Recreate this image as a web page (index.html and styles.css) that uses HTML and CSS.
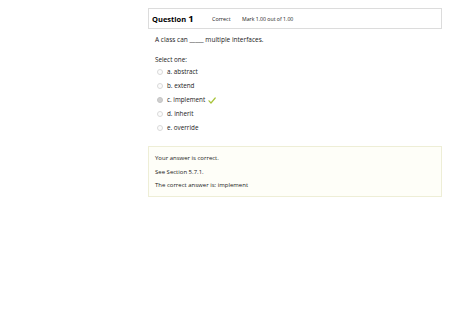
FILE: index.html
```html
<!DOCTYPE html>
<html>
<head>
<meta charset="utf-8">
<link rel="stylesheet" href="styles.css">
</head>
<body>
<div class="page">
  <div class="info">
    <h3 class="qno">Question <span class="num">1</span></h3>
    <div class="state">Correct</div>
    <div class="grade">Mark 1.00 out of 1.00</div>
  </div>
  <div class="content">
    <div class="qtext">A class can _____ multiple interfaces.</div>
    <div class="prompt">Select one:</div>
    <div class="answers">
      <div class="opt"><span class="radio"></span><span>a. abstract</span></div>
      <div class="opt"><span class="radio"></span><span>b. extend</span></div>
      <div class="opt"><span class="radio checked"></span><span>c. implement</span>
        <svg class="tick" width="8" height="7" viewBox="0 0 8 7"><path d="M1 3.8 L3 6 L7.2 1" fill="none" stroke="#a8c43a" stroke-width="1.2" stroke-linecap="round" stroke-linejoin="round"/></svg>
      </div>
      <div class="opt"><span class="radio"></span><span>d. inherit</span></div>
      <div class="opt"><span class="radio"></span><span>e. override</span></div>
    </div>
  </div>
  <div class="outcome">
    <p>Your answer is correct.</p>
    <p>See Section 5.7.1.</p>
    <p>The correct answer is: implement</p>
  </div>
</div>
</body>
</html>
```
FILE: styles.css
```css
html, body {
  margin: 0;
  padding: 0;
  background: #fff;
}
body {
  font-family: "Open Sans", "Liberation Sans", sans-serif;
  color: #1a1a1a;
}
.page {
  margin-left: 148px;
  padding-top: 8px;
  width: 294px;
}
.info {
  display: flex;
  align-items: center;
  border: 1px solid #dcdcdc;
  box-sizing: border-box;
  height: 21px;
  padding-left: 3px;
}
.qno {
  margin: 0;
  font-size: 7.5px;
  font-weight: 700;
  color: #000;
  width: 60px;
}
.qno .num {
  font-size: 9.5px;
}
.state {
  font-size: 5.4px;
  width: 30px;
}
.grade {
  font-size: 5.2px;
}
.content {
  padding-left: 7px;
  padding-top: 6px;
}
.qtext {
  font-size: 6.5px;
  line-height: 9px;
}
.prompt {
  font-size: 6.3px;
  margin-top: 12px;
  line-height: 8px;
}
.answers {
  margin-top: 4px;
  padding-left: 2px;
  display: flex;
  flex-direction: column;
  gap: 6px;
}
.opt {
  display: flex;
  align-items: center;
  gap: 4px;
  font-size: 6.3px;
  line-height: 8px;
}
.radio {
  width: 6px;
  height: 6px;
  border-radius: 50%;
  border: 0.5px solid #dadada;
  box-sizing: border-box;
  background: #fcfcfc;
}
.radio.checked {
  background: #cfcfcf;
  border-color: #c4c4c4;
}
.tick {
  margin-left: -1px;
}
.outcome {
  margin-top: 14px;
  border: 1px solid #eeeed6;
  background: #fefef8;
  padding: 5px 6px 3px 6px;
}
.outcome p {
  margin: 0;
  font-size: 6px;
  line-height: 13.5px;
}
```
